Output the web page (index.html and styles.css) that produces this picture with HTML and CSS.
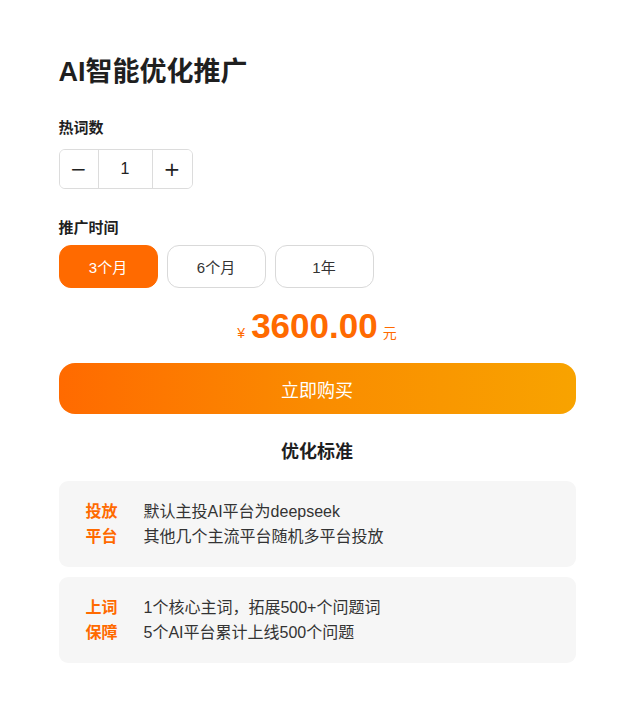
FILE: index.html
```html
<!DOCTYPE html>
<html lang="zh-CN">
<head>
<meta charset="utf-8">
<title>AI智能优化推广</title>
<link rel="stylesheet" href="styles.css">
</head>
<body>
<main class="page">
  <h1 class="title">AI智能优化推广</h1>

  <div class="label label-first">热词数</div>
  <div class="stepper">
    <button class="step-btn step-minus" type="button">−</button>
    <div class="step-value">1</div>
    <button class="step-btn step-plus" type="button">+</button>
  </div>

  <div class="label label-second">推广时间</div>
  <div class="options">
    <button class="option option-active" type="button">3个月</button>
    <button class="option" type="button">6个月</button>
    <button class="option" type="button">1年</button>
  </div>

  <div class="price">
    <span class="price-sign">¥</span>
    <span class="price-num">3600.00</span>
    <span class="price-unit">元</span>
  </div>

  <button class="buy" type="button">立即购买</button>

  <h2 class="section-title">优化标准</h2>

  <div class="cards">
    <div class="card">
      <div class="card-label">投放平台</div>
      <div class="card-text">
        <div>默认主投AI平台为deepseek</div>
        <div>其他几个主流平台随机多平台投放</div>
      </div>
    </div>
    <div class="card">
      <div class="card-label">上词保障</div>
      <div class="card-text">
        <div>1个核心主词，拓展500+个问题词</div>
        <div>5个AI平台累计上线500个问题</div>
      </div>
    </div>
  </div>
</main>
</body>
</html>
```

FILE: styles.css
```css
* { box-sizing: border-box; }

html, body {
  margin: 0;
  padding: 0;
  background: #ffffff;
}

body {
  font-family: "Liberation Sans", "Noto Sans CJK SC", sans-serif;
  color: #333333;
}

.page {
  width: 517px;
  margin: 0 auto;
  padding-top: 55px;
  display: flex;
  flex-direction: column;
}

.title {
  margin: 0;
  font-size: 27px;
  line-height: 34px;
  font-weight: 700;
  color: #1f1f1f;
}

.label {
  font-size: 15px;
  line-height: 20px;
  font-weight: 700;
  color: #1f1f1f;
}

.label-first { margin-top: 29px; }
.label-second { margin-top: 29px; }

.stepper {
  margin-top: 11px;
  display: flex;
  width: 134px;
  height: 40px;
  border: 1px solid #dcdcdc;
  border-radius: 6px;
  overflow: hidden;
}

.step-btn {
  border: 0;
  background: #ffffff;
  padding: 0;
  font-family: "DejaVu Sans", "Liberation Sans", sans-serif;
  font-size: 20px;
  color: #222222;
  display: flex;
  align-items: center;
  justify-content: center;
}

.step-minus { width: 38px; }
.step-plus { width: 39px; }

.step-value {
  width: 55px;
  border-left: 1px solid #dcdcdc;
  border-right: 1px solid #dcdcdc;
  display: flex;
  align-items: center;
  justify-content: center;
  font-size: 16px;
  color: #222222;
}

.options {
  margin-top: 7px;
  display: flex;
  gap: 9px;
}

.option {
  width: 99px;
  height: 43px;
  border: 1px solid #d9d9d9;
  border-radius: 12px;
  background: #ffffff;
  font-family: "Liberation Sans", "Noto Sans CJK SC", sans-serif;
  font-size: 15px;
  color: #333333;
  padding: 0;
}

.option-active {
  background: #ff6a00;
  border-color: #ff6a00;
  color: #ffffff;
}

.price {
  margin-top: 15px;
  height: 45px;
  display: flex;
  justify-content: center;
  align-items: baseline;
  gap: 6px;
  color: #ff6a00;
}

.price-sign {
  font-size: 14px;
  line-height: 45px;
}

.price-num {
  font-size: 35px;
  line-height: 45px;
  font-weight: 700;
}

.price-unit {
  font-size: 14px;
  line-height: 45px;
  margin-left: -1px;
}

.buy {
  margin-top: 15px;
  width: 100%;
  height: 51px;
  border: 0;
  border-radius: 16px;
  background: linear-gradient(90deg, #ff6a00 0%, #fa8c00 50%, #f8a300 100%);
  color: #ffffff;
  font-family: "Liberation Sans", "Noto Sans CJK SC", sans-serif;
  font-size: 18px;
  padding: 0;
}

.section-title {
  margin: 26px 0 0;
  text-align: center;
  font-size: 18px;
  line-height: 24px;
  font-weight: 700;
  color: #1f1f1f;
}

.cards {
  margin-top: 17px;
  display: flex;
  flex-direction: column;
  gap: 10px;
}

.card {
  background: #f6f6f6;
  border-radius: 9px;
  padding: 18px 26px 18px 27px;
  display: flex;
  gap: 26px;
}

.card-label {
  width: 32px;
  font-size: 16px;
  line-height: 25px;
  font-weight: 700;
  color: #ff6a00;
}

.card-text {
  font-size: 16px;
  line-height: 25px;
  color: #333333;
}
```
